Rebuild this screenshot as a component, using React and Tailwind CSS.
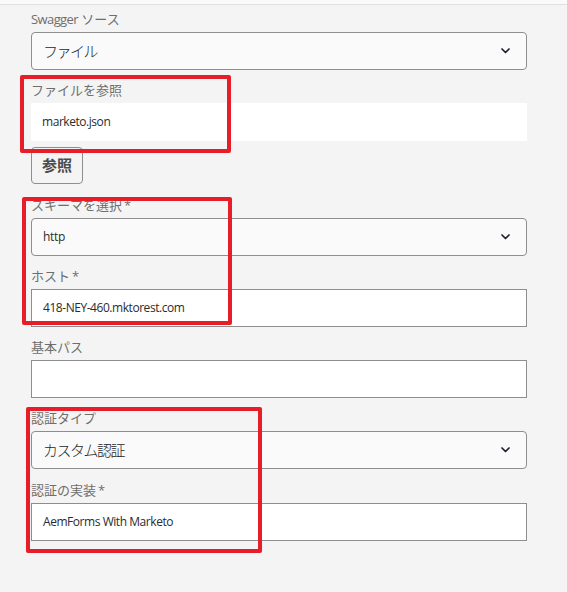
import React from 'react';

const font = { fontFamily: '"Open Sans", "Noto Sans CJK JP", sans-serif' };

function Chevron() {
  return (
    <svg width="9" height="6" viewBox="0 0 9 6" className="shrink-0">
      <path d="M1 1 L4.5 4.5 L8 1" fill="none" stroke="#1f1f2f" strokeWidth="1.7" strokeLinecap="round" strokeLinejoin="round" />
    </svg>
  );
}

function Label({ children, required }) {
  return (
    <div className="h-5 leading-5 mb-[3px] text-[13px] text-[#6e6e6e]">
      {children}
      {required && <span className="ml-[2px]">*</span>}
    </div>
  );
}

function Select({ value, big }) {
  return (
    <div className="h-[38px] flex items-center justify-between pl-[11px] pr-[16px] bg-[#fafafa] border border-[#8e8e8e] rounded-[4px]">
      <span
        className={
          big
            ? 'text-[15px] font-light tracking-[-1.5px] text-[#1f1f1f]'
            : 'text-[12px] tracking-[-0.3px] text-[#2c2c2c]'
        }
      >
        {value}
      </span>
      <Chevron />
    </div>
  );
}

function TextInput({ value, bare }) {
  return (
    <div
      className={
        bare
          ? 'h-[38px] flex items-center px-[11px] bg-white'
          : 'h-[38px] flex items-center px-[11px] bg-white border border-[#8e8e8e]'
      }
    >
      <span className="text-[12px] tracking-[-0.45px] text-[#2c2c2c]">{value}</span>
    </div>
  );
}

export default function App() {
  return (
    <div className="relative w-[567px] h-[592px] bg-[#f4f4f4] overflow-hidden" style={font}>
      {/* top strip */}
      <div className="h-[5px] bg-[#fafafa] border-b border-[#e0e0e0]" />

      <div className="w-[496px] ml-[31px] pt-[4px]">
        <Label>
          <span className="tracking-[-0.6px]">Swagger</span> ソース
        </Label>
        <Select value="ファイル" big />

        <div className="mt-[10px]">
          <Label>ファイルを参照</Label>
          <TextInput value="marketo.json" bare />
          <button className="mt-[6px] w-[52px] h-[37px] flex items-center justify-center border border-[#8e8e8e] rounded-[4px] bg-[#f4f4f4] text-[15px] font-bold text-[#4b4b4b]">
            参照
          </button>
        </div>

        <div className="mt-[11px]">
          <Label required>スキーマを選択</Label>
          <Select value="http" />
        </div>

        <div className="mt-[10px]">
          <Label required>ホスト</Label>
          <TextInput value="418-NEY-460.mktorest.com" />
        </div>

        <div className="mt-[10px]">
          <Label>基本パス</Label>
          <TextInput value="" />
        </div>

        <div className="mt-[10px]">
          <Label>認証タイプ</Label>
          <Select value="カスタム認証" big />
        </div>

        <div className="mt-[11px]">
          <Label required>認証の実装</Label>
          <TextInput value="AemForms With Marketo" />
        </div>
      </div>

      {/* annotation boxes */}
      <div className="absolute left-[20px] top-[75px] w-[211px] h-[78px] border-4 border-[#e61e2a] rounded-[2px] pointer-events-none" />
      <div className="absolute left-[22px] top-[197px] w-[210px] h-[128px] border-4 border-[#e61e2a] rounded-[2px] pointer-events-none" />
      <div className="absolute left-[26px] top-[407px] w-[236px] h-[146px] border-4 border-[#e61e2a] rounded-[2px] pointer-events-none" />
    </div>
  );
}
